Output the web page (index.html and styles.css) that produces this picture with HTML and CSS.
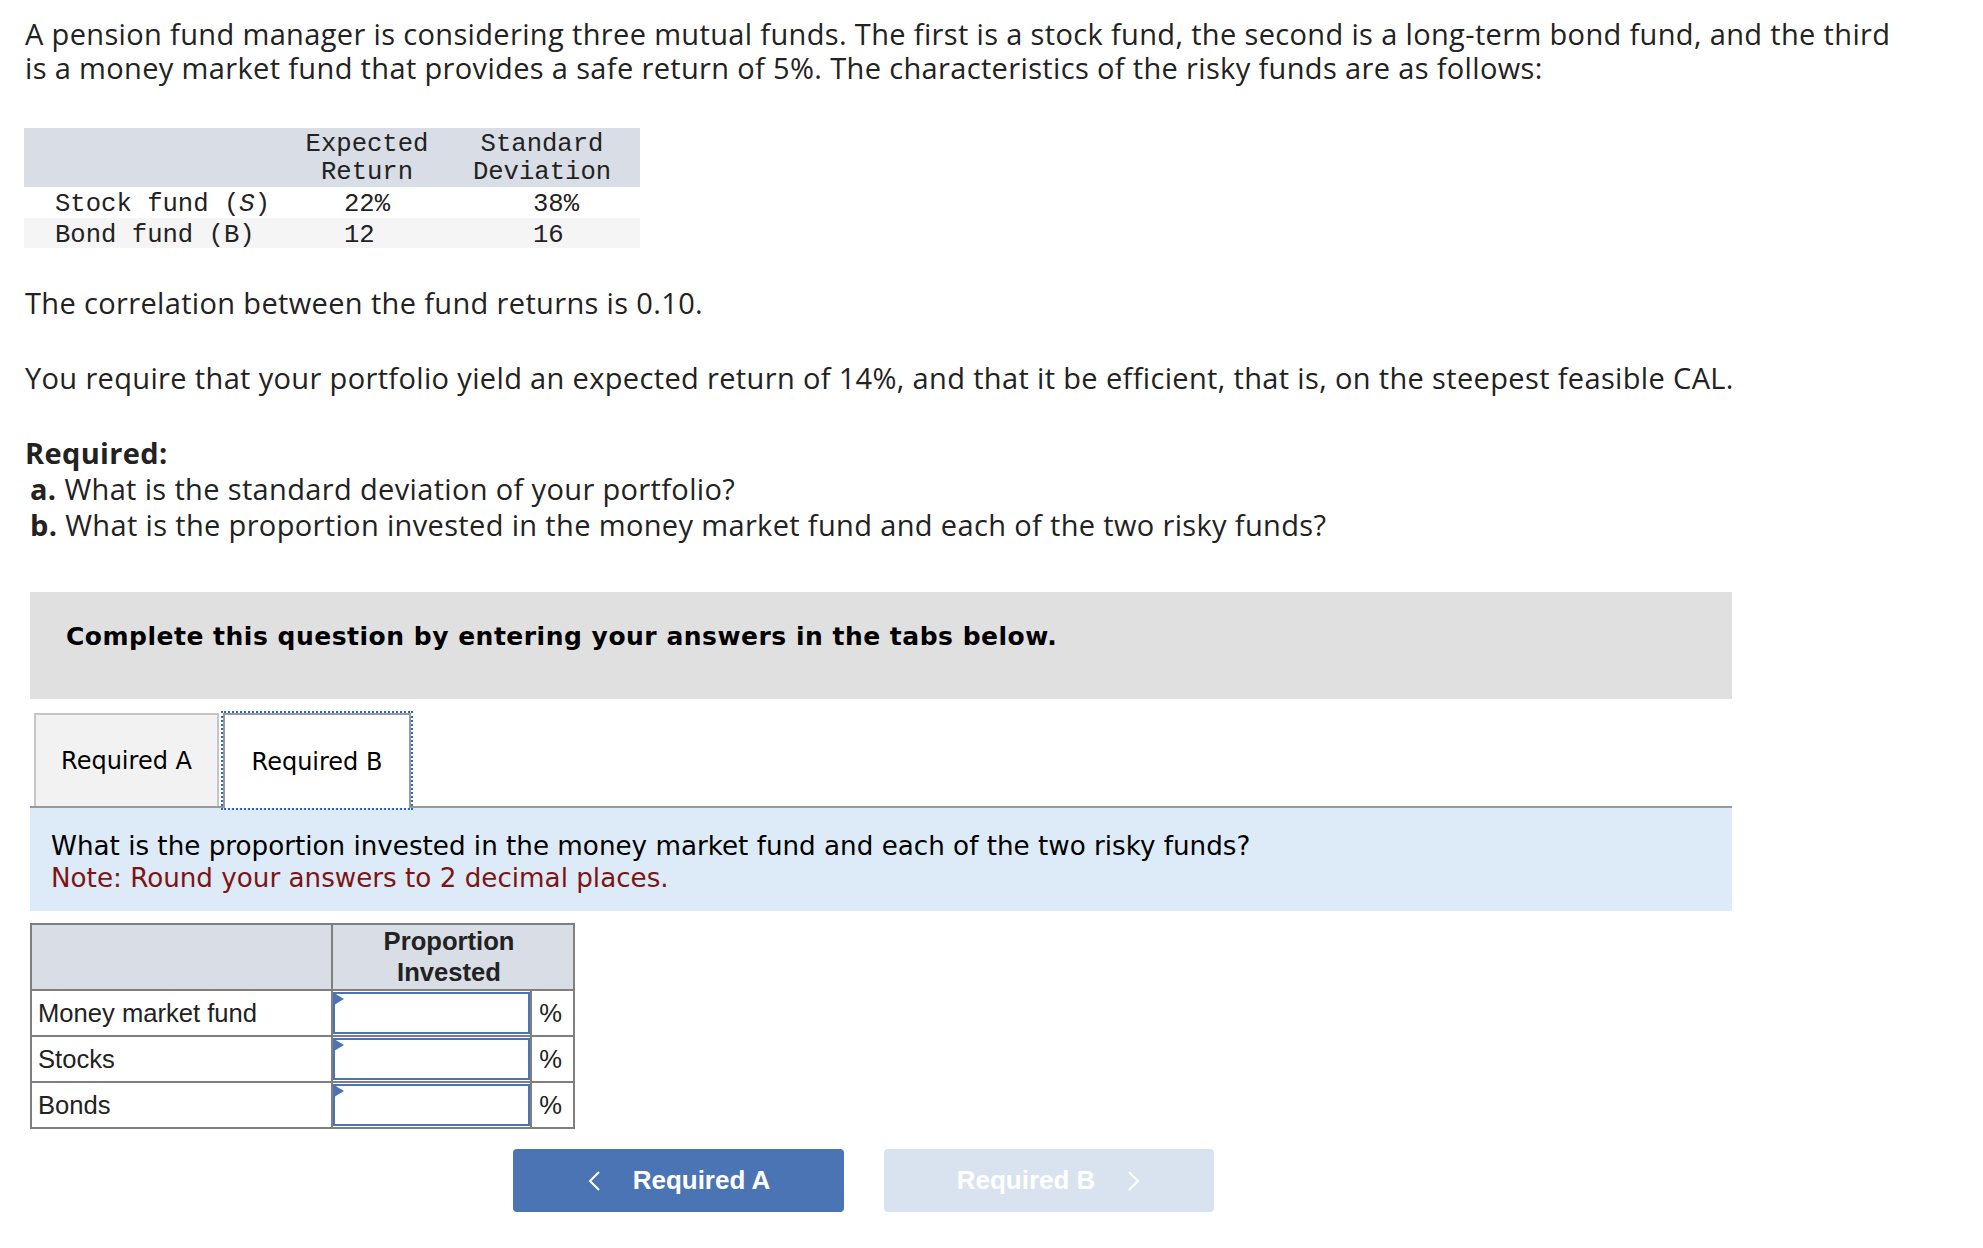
FILE: index.html
```html
<!DOCTYPE html>
<html lang="en">
<head>
<meta charset="utf-8">
<title>Portfolio question</title>
<link rel="stylesheet" href="styles.css">
</head>
<body>
<div class="page">
  <p class="intro">A pension fund manager is considering three mutual funds. The first is a stock fund, the second is a long-term bond fund, and the third is a money market fund that provides a safe return of 5%. The characteristics of the risky funds are as follows:</p>

  <table class="data">
    <colgroup><col class="dc1"><col class="dc2"><col class="dc3"></colgroup>
    <thead>
      <tr><th></th><th>Expected<br>Return</th><th>Standard<br>Deviation</th></tr>
    </thead>
    <tbody>
      <tr><td class="lbl">Stock fund (<i>S</i>)</td><td class="v2">22%</td><td class="v3">38%</td></tr>
      <tr class="alt"><td class="lbl">Bond fund (B)</td><td class="v2">12<span class="ghost">%</span></td><td class="v3">16<span class="ghost">%</span></td></tr>
    </tbody>
  </table>

  <p class="para corr">The correlation between the fund returns is 0.10.</p>
  <p class="para you">You require that your portfolio yield an expected return of 14%, and that it be efficient, that is, on the steepest feasible CAL.</p>

  <div class="required">
    <div class="req-title">Required:</div>
    <div class="req-item"><b>a.</b> What is the standard deviation of your portfolio?</div>
    <div class="req-item"><b>b.</b> What is the proportion invested in the money market fund and each of the two risky funds?</div>
  </div>

  <div class="widget">
    <div class="instr">Complete this question by entering your answers in the tabs below.</div>

    <div class="tabs">
      <div class="tab">Required A</div>
      <div class="tab active">Required B</div>
    </div>

    <div class="panel">
      <div>What is the proportion invested in the money market fund and each of the two risky funds?</div>
      <div class="note">Note: Round your answers to 2 decimal places.</div>
    </div>

    <table class="answer">
      <colgroup><col class="ac1"><col class="ac2"><col class="ac3"></colgroup>
      <thead>
        <tr><th></th><th colspan="2">Proportion<br>Invested</th></tr>
      </thead>
      <tbody>
        <tr><td class="lbl">Money market fund</td><td class="inp"><input type="text" aria-label="Money market fund"><span class="flag"></span></td><td class="pct">%</td></tr>
        <tr><td class="lbl">Stocks</td><td class="inp"><input type="text" aria-label="Stocks"><span class="flag"></span></td><td class="pct">%</td></tr>
        <tr><td class="lbl">Bonds</td><td class="inp"><input type="text" aria-label="Bonds"><span class="flag"></span></td><td class="pct">%</td></tr>
      </tbody>
    </table>

    <div class="nav">
      <button class="btn prev" type="button">
        <svg class="chev" width="14" height="22" viewBox="0 0 14 22"><polyline points="12,2 3,11 12,20" fill="none" stroke="#fff" stroke-width="2"/></svg>
        <span>Required A</span>
      </button>
      <button class="btn next" type="button">
        <span>Required B</span>
        <svg class="chev" width="14" height="22" viewBox="0 0 14 22"><polyline points="2,2 11,11 2,20" fill="none" stroke="#fff" stroke-width="2"/></svg>
      </button>
    </div>
  </div>
</div>
</body>
</html>
```

FILE: styles.css
```css
* { box-sizing: border-box; }

html, body {
  margin: 0;
  padding: 0;
  background: #fff;
}

body {
  font-family: "Open Sans", "Liberation Sans", sans-serif;
  color: #222;
}

.page {
  padding: 17px 0 40px 25px;
}

.intro {
  margin: 0;
  width: 1880px;
  font-size: 29px;
  letter-spacing: 0.35px;
  line-height: 34px;
}

/* characteristics table */
.data {
  margin-top: 43px;
  margin-left: -1px;
  width: 616px;
  table-layout: fixed;
  border-collapse: collapse;
  font-family: "Liberation Mono", "DejaVu Sans Mono", monospace;
  font-size: 25.6px;
  color: #222;
}
.dc1 { width: 266px; }
.dc2 { width: 154px; }
.dc3 { width: 196px; }

.data th {
  background: #d9dde5;
  font-weight: normal;
  text-align: center;
  padding: 3px 0 0;
  line-height: 28px;
}
.data td {
  padding: 5px 0 0;
  line-height: 25.5px;
  white-space: nowrap;
}
.data td.lbl { padding-left: 31px; }
.data td.v2 { text-align: center; }
.data td.v3 { text-align: center; padding-left: 28px; }
.data tr.alt td { background: #f5f5f5; }
.ghost { visibility: hidden; }

.para {
  margin: 0;
  font-size: 29px;
  letter-spacing: 0.35px;
  line-height: 34px;
}
.corr { margin-top: 38px; }
.you { margin-top: 41px; }

.required {
  margin-top: 40px;
  font-size: 29px;
  letter-spacing: 0.35px;
  line-height: 36px;
}
.req-title { font-weight: 700; }
.req-item { padding-left: 5px; }
.req-item b { font-weight: 700; }

/* answer widget */
.widget {
  margin-top: 49px;
  margin-left: 5px;
  width: 1702px;
  font-family: "DejaVu Sans", Verdana, sans-serif;
  color: #000;
}

.instr {
  height: 107px;
  padding: 30px 36px 0;
  background: #e0e0e0;
  font-size: 25px;
  letter-spacing: 0.5px;
  font-weight: 700;
  line-height: 30px;
}

.tabs {
  display: flex;
  margin-top: 14px;
  padding-left: 4px;
  border-bottom: 2px solid #999;
}
.tab {
  display: flex;
  align-items: center;
  justify-content: center;
  height: 93px;
  font-size: 24px;
}
.tab:first-child {
  width: 185px;
  background: #f2f2f2;
  border: 2px solid #c6c6c6;
  border-bottom: none;
}
.tab.active {
  width: 188px;
  height: 95px;
  margin-left: 4px;
  margin-bottom: -2px;
  background: #fff;
  border: 2px solid #999;
  border-bottom: none;
  outline: 2px dotted #2f66c8;
  outline-offset: 0;
}

.panel {
  padding: 23px 21px 17px;
  background: #ddeaf7;
  font-size: 26.2px;
  line-height: 31.5px;
}
.note { color: #7d1414; }

.answer {
  margin-top: 12px;
  width: 543px;
  table-layout: fixed;
  border-collapse: collapse;
  font-family: "Liberation Sans", Arial, sans-serif;
  font-size: 25.6px;
  color: #222;
}
.ac1 { width: 301px; }
.ac2 { width: 199px; }
.ac3 { width: 43px; }

.answer th,
.answer td {
  border: 2px solid #7f7f7f;
  padding: 0;
}
.answer th {
  height: 66px;
  background: #d9dde5;
  font-weight: 700;
  line-height: 31px;
  text-align: center;
  vertical-align: middle;
}
.answer th[colspan] { padding-right: 8px; }
.answer td {
  height: 46px;
  vertical-align: middle;
}
.answer td.lbl { padding-left: 6px; }
.answer td.pct { text-align: center; padding-right: 4px; }
.answer td.inp {
  position: relative;
  padding: 1px 0;
}
.answer input {
  display: block;
  width: 100%;
  height: 42px;
  margin: 0;
  border: 2px solid #4a74b4;
  background: #fff;
  font: inherit;
  outline: none;
}
.flag {
  position: absolute;
  left: 1px;
  top: 2px;
  z-index: 2;
  width: 0;
  height: 0;
  border-left: 10px solid #4a74b4;
  border-top: 6px solid transparent;
  border-bottom: 6px solid transparent;
}

.nav {
  display: flex;
  gap: 40px;
  margin-top: 20px;
  padding-left: 483px;
}
.btn {
  display: flex;
  align-items: center;
  justify-content: center;
  gap: 32px;
  width: 331px;
  height: 63px;
  border: none;
  border-radius: 4px;
  font-family: "Liberation Sans", Arial, sans-serif;
  font-size: 26px;
  font-weight: 700;
  color: #fff;
  cursor: pointer;
}
.btn.prev { background: #4a74b4; }
.btn.next { background: #d9e3ef; width: 330px; }
.chev { display: block; }
```
